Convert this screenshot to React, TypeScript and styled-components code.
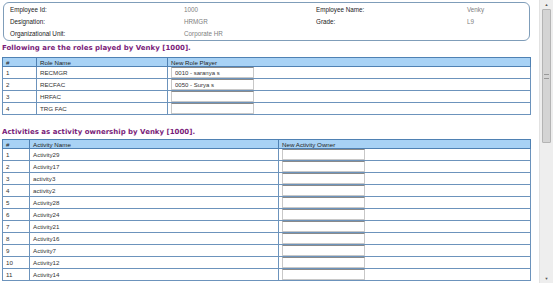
import styled, { createGlobalStyle } from "styled-components";

type Role = { name: string; player: string };

const roles: Role[] = [
  { name: "RECMGR", player: "0010 - saranya s" },
  { name: "RECFAC", player: "0050 - Surya s" },
  { name: "HRFAC", player: "" },
  { name: "TRG FAC", player: "" },
];

const activities = [
  "Activity29",
  "Activity17",
  "activity3",
  "activity2",
  "Activity28",
  "Activity24",
  "Activity21",
  "Activity16",
  "Activity7",
  "Activity12",
  "Activity14",
];

const GlobalStyle = createGlobalStyle`
  html, body {
    margin: 0;
    padding: 0;
    background: #ffffff;
    overflow: hidden;
  }
  body {
    font-family: "Liberation Sans", Arial, sans-serif;
  }
`;

const App = () => {
  return (
    <>
      <GlobalStyle />
      <Window>
        <Page>
          <InfoBox>
            <Label>Employee Id:</Label>
            <Value>1000</Value>
            <Label>Employee Name:</Label>
            <Value>Venky</Value>
            <Label>Designation:</Label>
            <Value>HRMGR</Value>
            <Label>Grade:</Label>
            <Value>L9</Value>
            <Label>Organizational Unit:</Label>
            <Value>Corporate HR</Value>
          </InfoBox>

          <Heading $top={3} $bottom={4}>
            Following are the roles played by Venky [1000].
          </Heading>
          <Table>
            <colgroup>
              <col style={{ width: 34 }} />
              <col style={{ width: 131 }} />
              <col />
            </colgroup>
            <thead>
              <tr>
                <Th>#</Th>
                <Th>Role Name</Th>
                <Th>New Role Player</Th>
              </tr>
            </thead>
            <tbody>
              {roles.map((role, i) => (
                <tr key={role.name}>
                  <Td>{i + 1}</Td>
                  <Td>{role.name}</Td>
                  <Td>
                    <TextBox value={role.player} readOnly />
                  </Td>
                </tr>
              ))}
            </tbody>
          </Table>

          <Heading $top={13} $bottom={2}>
            Activities as activity ownership by Venky [1000].
          </Heading>
          <Table>
            <colgroup>
              <col style={{ width: 27 }} />
              <col style={{ width: 249 }} />
              <col />
            </colgroup>
            <thead>
              <tr>
                <Th>#</Th>
                <Th>Activity Name</Th>
                <Th>New Activity Owner</Th>
              </tr>
            </thead>
            <tbody>
              {activities.map((name, i) => (
                <tr key={i}>
                  <Td>{i + 1}</Td>
                  <Td>{name}</Td>
                  <Td>
                    <TextBox value="" readOnly />
                  </Td>
                </tr>
              ))}
            </tbody>
          </Table>
        </Page>

        <ScrollBar>
          <Arrow>▲</Arrow>
          <Track>
            <Thumb>
              <Grip />
            </Thumb>
          </Track>
          <Arrow>▼</Arrow>
        </ScrollBar>
      </Window>
    </>
  );
};

const Window = styled.div`
  display: flex;
  width: 553px;
  height: 283px;
  overflow: hidden;
`;

const Page = styled.div`
  flex: 1;
  padding: 2px 9px 0 2px;
  overflow: hidden;
`;

const InfoBox = styled.div`
  display: grid;
  grid-template-columns: 174px 132px 151px 1fr;
  grid-auto-rows: 12px;
  align-items: center;
  margin-left: 1px;
  padding: 0 6px 1px;
  border: 1px solid #7f9db9;
  border-radius: 6px;
  font-size: 6.3px;
`;

const Label = styled.div`
  color: #222222;
`;

const Value = styled.div`
  color: #808080;
`;

const Heading = styled.div<{ $top: number; $bottom: number }>`
  margin-top: ${(p) => p.$top}px;
  margin-bottom: ${(p) => p.$bottom}px;
  font-family: "DejaVu Sans", Verdana, sans-serif;
  font-size: 7px;
  font-weight: bold;
  color: #7a1c7a;
  line-height: 9px;
`;

const Table = styled.table`
  width: 529px;
  border-collapse: collapse;
  table-layout: fixed;
  font-size: 6.2px;
  border: 1px solid #4f81b3;
`;

const Th = styled.th`
  height: 8px;
  padding: 0 3px;
  background: #a8d2f5;
  color: #222222;
  font-weight: normal;
  text-align: left;
  border: 1px solid #4f81b3;
  line-height: 7px;
`;

const Td = styled.td`
  height: 11px;
  padding: 0 3px;
  color: #333333;
  border: 1px solid #6c93bc;
  line-height: 11px;
`;

const TextBox = styled.input`
  display: block;
  box-sizing: border-box;
  width: 83px;
  height: 11px;
  margin: 0;
  padding: 0 3px;
  border: 1px solid #c8c8c8;
  border-top-color: #8a8a8a;
  font-family: "Liberation Sans", Arial, sans-serif;
  font-size: 6px;
  color: #333333;
  background: #ffffff;
  outline: none;
`;

const ScrollBar = styled.div`
  display: flex;
  flex-direction: column;
  width: 13px;
  background: #eeeeee;
  border-left: 1px solid #e2e2e2;
`;

const Arrow = styled.div`
  height: 9px;
  font-size: 4px;
  line-height: 9px;
  text-align: center;
  color: #555555;
`;

const Track = styled.div`
  flex: 1;
  padding: 0 2px;
`;

const Thumb = styled.div`
  display: flex;
  align-items: center;
  justify-content: center;
  height: 132px;
  background: #d4d4d4;
  border: 1px solid #b4b4b4;
  border-radius: 1px;
`;

const Grip = styled.div`
  width: 5px;
  height: 5px;
  border-top: 1px solid #999999;
  border-bottom: 1px solid #999999;
  box-sizing: border-box;
`;

export default App;
